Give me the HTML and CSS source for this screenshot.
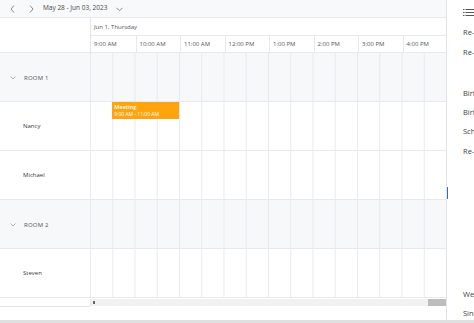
FILE: index.html
```html
<!DOCTYPE html>
<html>
<head>
<meta charset="utf-8">
<link rel="stylesheet" href="styles.css">
</head>
<body>
<div class="app">
  <div class="scheduler">
    <div class="toolbar">
      <span class="nav prev"><svg width="5" height="8" viewBox="0 0 5 8"><polyline points="4,0.5 1,4 4,7.5" fill="none" stroke="#8a8a8a" stroke-width="1"/></svg></span>
      <span class="nav next"><svg width="5" height="8" viewBox="0 0 5 8"><polyline points="1,0.5 4,4 1,7.5" fill="none" stroke="#8a8a8a" stroke-width="1"/></svg></span>
      <span class="range">May 28 - Jun 03, 2023</span>
      <span class="dd"><svg width="7" height="5" viewBox="0 0 7 5"><polyline points="0.5,0.8 3.5,3.8 6.5,0.8" fill="none" stroke="#8a8a8a" stroke-width="1"/></svg></span>
    </div>
    <div class="grid">
      <div class="corner"></div>
      <div class="head">
        <div class="date">Jun 1, Thursday</div>
        <div class="times">
          <div class="t">9:00 AM</div>
          <div class="t">10:00 AM</div>
          <div class="t">11:00 AM</div>
          <div class="t">12:00 PM</div>
          <div class="t">1:00 PM</div>
          <div class="t">2:00 PM</div>
          <div class="t">3:00 PM</div>
          <div class="t">4:00 PM</div>
        </div>
      </div>

      <div class="res group"><svg class="caret" width="6" height="4" viewBox="0 0 6 4"><polyline points="0.5,0.5 3,3 5.5,0.5" fill="none" stroke="#a8a8a8" stroke-width="0.9"/></svg><span>ROOM 1</span></div>
      <div class="lane group"></div>

      <div class="res"><span>Nancy</span></div>
      <div class="lane">
        <div class="event">
          <div class="ev-title">Meeting</div>
          <div class="ev-time">9:00 AM - 11:00 AM</div>
        </div>
      </div>

      <div class="res"><span>Michael</span></div>
      <div class="lane"></div>

      <div class="res group"><svg class="caret" width="6" height="4" viewBox="0 0 6 4"><polyline points="0.5,0.5 3,3 5.5,0.5" fill="none" stroke="#a8a8a8" stroke-width="0.9"/></svg><span>ROOM 2</span></div>
      <div class="lane group"></div>

      <div class="res"><span>Steven</span></div>
      <div class="lane"></div>

      <div class="res-foot"></div>
      <div class="hscroll">
        <span class="arrow"></span>
        <span class="thumb"></span>
      </div>
    </div>
  </div>
  <aside class="panel">
    <span class="splitter"></span>
    <svg class="list-icon" width="11" height="7" viewBox="0 0 11 7">
      <rect x="0" y="0" width="1.5" height="1" fill="#555"/>
      <rect x="0" y="3" width="1.5" height="1" fill="#555"/>
      <rect x="0" y="6" width="1.5" height="1" fill="#555"/>
      <rect x="2.5" y="0" width="8.5" height="1" fill="#555"/>
      <rect x="2.5" y="3" width="8.5" height="1" fill="#555"/>
      <rect x="2.5" y="6" width="8.5" height="1" fill="#555"/>
    </svg>
    <div class="p-item first">Re-schedule</div>
    <div class="p-item">Re-order</div>
    <div class="p-item gap">Birthday</div>
    <div class="p-item tight">Birthday party</div>
    <div class="p-item tight">School</div>
    <div class="p-item">Re-check</div>
    <div class="spacer"></div>
    <div class="p-item">Weekly</div>
    <div class="p-item tight">Since</div>
  </aside>
</div>
<div class="footer"></div>
</body>
</html>
```
FILE: styles.css
```css
* { box-sizing: border-box; }
html, body {
  margin: 0;
  padding: 0;
  width: 474px;
  height: 323px;
  overflow: hidden;
  background: #fff;
  font-family: "Open Sans", "Noto Sans", sans-serif;
  color: #333;
}
.app {
  display: flex;
  height: 320px;
}
.scheduler {
  width: 447px;
  flex: none;
  border-right: 1px solid #e3e4e7;
  display: flex;
  flex-direction: column;
}
.toolbar {
  height: 18px;
  background: #f8f9fa;
  border-bottom: 1px solid #e8e9ec;
  display: flex;
  align-items: center;
  padding-left: 10px;
}
.nav { display: flex; width: 5px; height: 8px; }
.next { margin-left: 14px; }
.range {
  margin-left: 9px;
  font-size: 6.5px;
  color: #4a4a4a;
  line-height: 1;
}
.dd { display: flex; margin-left: 9px; margin-top: 1px; }

.grid {
  display: grid;
  grid-template-columns: 90px 356px;
  grid-template-rows: 35px 49px 49px 49px 49px 49px 9px;
}
.corner {
  border-bottom: 1px solid #e8e9ec;
}
.head {
  border-left: 1px solid #e3e4e7;
  display: flex;
  flex-direction: column;
}
.date {
  height: 18px;
  border-bottom: 1px solid #e8e9ec;
  font-size: 6px;
  color: #555;
  padding-left: 3px;
  padding-top: 5px;
  line-height: 9px;
}
.times {
  height: 17px;
  display: flex;
  border-bottom: 1px solid #e8e9ec;
}
.t {
  width: 44.5px;
  flex: none;
  font-size: 6px;
  color: #555;
  padding-left: 3px;
  padding-top: 4px;
  line-height: 9px;
  border-left: 1px solid #e8e9ec;
}
.t:first-child { border-left: none; }

.res {
  border-bottom: 1px solid #e8e9ec;
  display: flex;
  align-items: center;
  padding-left: 23px;
  font-size: 6px;
  color: #3a3a3a;
}
.res.group {
  padding-left: 10px;
  background: #f7f8fa;
  color: #555;
  letter-spacing: 0.2px;
  padding-top: 1px;
}
.caret { margin-right: 8px; }
.lane {
  position: relative;
  border-bottom: 1px solid #e8e9ec;
  background-image: linear-gradient(to right, #e8e9ec 1px, transparent 1px);
  background-size: 22.25px 100%;
}
.lane.group {
  background-color: #f7f8fa;
}
.event {
  position: absolute;
  left: 22.25px;
  top: 0;
  width: 66.75px;
  height: 17px;
  background: #ffa40f;
  color: #fff;
  padding: 2px 0 0 2px;
}
.ev-title {
  font-size: 5.6px;
  font-weight: 600;
  line-height: 7px;
}
.ev-time {
  font-size: 5px;
  line-height: 7px;
}
.res-foot {
  border-bottom: 1px solid #e3e4e7;
}
.hscroll {
  position: relative;
  background: #f1f1f1;
  height: 7px;
  margin-top: 1px;
  border-left: 1px solid #e3e4e7;
}
.arrow {
  position: absolute;
  left: 2px;
  top: 2px;
  width: 2px;
  height: 3px;
  background: #666;
}
.thumb {
  position: absolute;
  right: 0;
  top: 0;
  width: 18px;
  height: 7px;
  background: #bdbdbd;
}

.panel {
  position: relative;
  flex: 1;
  overflow: hidden;
  padding-left: 16px;
  display: flex;
  flex-direction: column;
  white-space: nowrap;
}
.splitter {
  position: absolute;
  left: 0;
  top: 187px;
  width: 1px;
  height: 12px;
  background: #2b6fd6;
}
.list-icon {
  margin-top: 9px;
  flex: none;
}
.p-item {
  font-size: 7.5px;
  line-height: 10px;
  color: #444;
  margin-top: 10px;
}
.p-item.first { margin-top: 11px; }
.p-item.gap { margin-top: 31px; }
.p-item.tight { margin-top: 9px; }
.spacer { flex: 1; }
.p-item:last-child { margin-bottom: 2px; }
.footer {
  height: 3px;
  background: #e0e0e0;
}
```
